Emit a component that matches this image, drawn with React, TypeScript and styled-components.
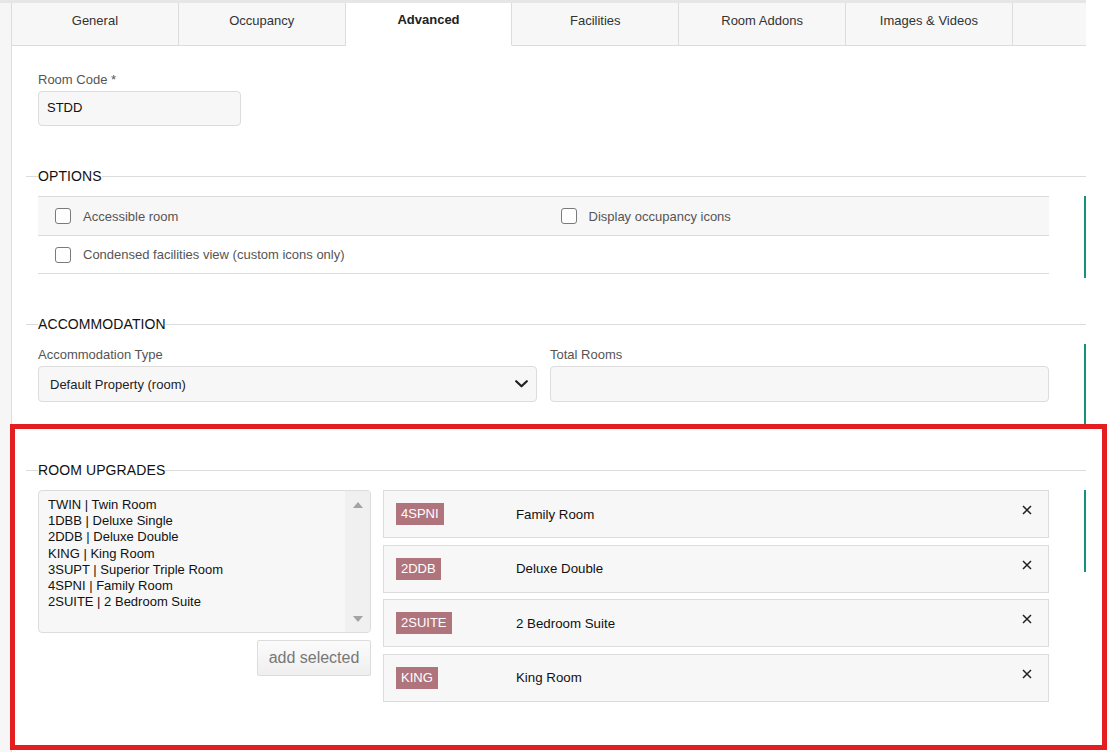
import React from "react";
import styled, { createGlobalStyle } from "styled-components";

const GlobalStyle = createGlobalStyle`
  html, body { margin: 0; padding: 0; background: #fff; }
  body {
    font-family: "Liberation Sans", Arial, sans-serif;
    font-size: 13px;
    color: #222;
  }
  * { box-sizing: border-box; }
`;

const Frame = styled.div`
  position: relative;
  width: 1109px;
  height: 752px;
  overflow: hidden;
  background: #fff;
`;

const Shell = styled.div`
  display: flex;
  width: 1086px;
  height: 752px;
  border-top: 3px solid #e6e6e6;
`;

const Gutter = styled.div`
  flex: 0 0 12px;
  background: #f6f6f6;
  border-right: 1px solid #dcdcdc;
`;

const Main = styled.div`
  flex: 1;
  display: flex;
  flex-direction: column;
  min-width: 0;
`;

const TabBar = styled.div`
  display: flex;
  height: 43px;
`;

const Tab = styled.div<{ $active?: boolean; $fill?: boolean }>`
  flex: ${(p) => (p.$fill ? "1 1 auto" : "0 0 166.8px")};
  padding-top: ${(p) => (p.$active ? 9 : 10)}px;
  line-height: 16px;
  text-align: center;
  font-size: 13px;
  color: ${(p) => (p.$active ? "#222" : "#333")};
  font-weight: ${(p) => (p.$active ? 700 : 400)};
  background: ${(p) => (p.$active ? "#fff" : "#f7f7f7")};
  border-right: ${(p) => (p.$fill ? "none" : "1px solid #dcdcdc")};
  border-bottom: 1px solid ${(p) => (p.$active ? "#fff" : "#dcdcdc")};
`;

const Body = styled.div`
  padding: 26px 0 0 14px;
`;

const Field = styled.div`
  display: flex;
  flex-direction: column;
`;

const CodeField = styled(Field)`
  padding-left: 12px;
  width: 215px;
`;

const Label = styled.label<{ $top?: number }>`
  display: block;
  padding-top: ${(p) => p.$top ?? 0}px;
  margin-bottom: 3px;
  line-height: 16px;
  font-size: 13px;
  color: #555;
`;

const TextBox = styled.div`
  height: 36px;
  display: flex;
  align-items: center;
  padding: 0 8px;
  background: #f7f7f7;
  border: 1px solid #dcdcdc;
  border-radius: 4px;
  font-size: 13px;
  color: #111;
`;

const CodeBox = styled(TextBox)`
  height: 35px;
  padding-bottom: 3px;
`;

const Section = styled.section<{ $gap: number }>`
  margin-top: ${(p) => p.$gap}px;
`;

const Legend = styled.div`
  display: flex;
  align-items: center;
  height: 18px;
  font-size: 14px;
  color: #111;
  letter-spacing: 0.1px;

  &::before {
    content: "";
    flex: 0 0 12px;
    height: 1px;
    background: #dcdcdc;
  }
  &::after {
    content: "";
    flex: 1;
    height: 1px;
    background: #dcdcdc;
  }
`;

const SectionBody = styled.div`
  display: flex;
  align-items: flex-start;
  margin-top: 11px;
  padding-left: 12px;
`;

const Content = styled.div`
  width: 1011px;
`;

const ScrollMark = styled.div`
  margin-left: auto;
  flex: 0 0 2px;
  height: 82px;
  background: #17917f;
`;

const OptionsTable = styled.div`
  border-top: 1px solid #dcdcdc;
`;

const OptionRow = styled.div<{ $shaded?: boolean }>`
  display: grid;
  grid-template-columns: 1fr 1fr;
  height: ${(p) => (p.$shaded ? 39 : 38)}px;
  background: ${(p) => (p.$shaded ? "#f7f7f7" : "#fff")};
  border-bottom: 1px solid #dcdcdc;
`;

const OptionCell = styled.label`
  display: flex;
  align-items: center;
  padding-left: 17px;
  font-size: 13px;
  color: #555;
`;

const CheckBox = styled.span`
  flex: 0 0 16px;
  width: 16px;
  height: 16px;
  margin-right: 12px;
  border: 1.5px solid #7a7a7a;
  border-radius: 3px;
  background: #fff;
`;

const TwoCols = styled.div`
  display: grid;
  grid-template-columns: 499px 499px;
  column-gap: 13px;
`;

const SelectBox = styled(TextBox)`
  justify-content: space-between;
  padding: 0 8px 0 11px;
  color: #222;
`;

const UpgradeGrid = styled.div`
  display: grid;
  grid-template-columns: 333px 666px;
  column-gap: 12px;
  align-items: start;
`;

const PickerColumn = styled.div`
  display: flex;
  flex-direction: column;
  align-items: flex-end;
`;

const ListBox = styled.div`
  display: flex;
  width: 100%;
  height: 143px;
  background: #f7f7f7;
  border: 1px solid #dcdcdc;
  border-radius: 4px;
  overflow: hidden;
`;

const ListOptions = styled.ul`
  flex: 1;
  margin: 0;
  padding: 6px 0 0 9px;
  list-style: none;
`;

const ListOption = styled.li`
  line-height: 16.2px;
  font-size: 13px;
  color: #111;
  white-space: nowrap;
`;

const ListScroll = styled.div`
  flex: 0 0 25px;
  display: flex;
  flex-direction: column;
  justify-content: space-between;
  align-items: center;
  padding: 11px 0 10px;
  background: #f0f0f0;
`;

const Arrow = styled.span<{ $down?: boolean }>`
  width: 0;
  height: 0;
  border-left: 5px solid transparent;
  border-right: 5px solid transparent;
  ${(p) =>
    p.$down
      ? "border-top: 6px solid #a3a3a3;"
      : "border-bottom: 6px solid #a3a3a3;"}
`;

const AddButton = styled.button`
  margin-top: 7px;
  width: 114px;
  height: 36px;
  padding: 0;
  font-family: "Liberation Sans", Arial, sans-serif;
  font-size: 16px;
  color: #777;
  background: linear-gradient(#fbfbfb, #efefef);
  border: 1px solid #dcdcdc;
  border-radius: 2px;
`;

const Chosen = styled.ul`
  display: flex;
  flex-direction: column;
  gap: 6.5px;
  margin: 0;
  padding: 0;
  list-style: none;
`;

const ChosenItem = styled.li`
  display: flex;
  align-items: center;
  height: 48px;
  padding: 0 16px 0 12px;
  background: #f7f7f7;
  border: 1px solid #dcdcdc;
`;

const CodeCell = styled.div`
  flex: 0 0 120px;
`;

const CodeBadge = styled.span`
  display: inline-block;
  height: 22px;
  line-height: 22px;
  padding: 0 5px;
  background: #b0747d;
  color: #fff;
  font-size: 13px;
`;

const RoomName = styled.span`
  flex: 1;
  font-size: 13.3px;
  color: #111;
`;

const RemoveButton = styled.span`
  align-self: flex-start;
  margin-top: 14px;
  display: flex;
`;

const Highlight = styled.div`
  position: absolute;
  left: 10px;
  top: 424px;
  width: 1097px;
  height: 326px;
  border: 5px solid #e41d21;
  pointer-events: none;
`;

const Chevron = () => (
  <svg width="13" height="8" viewBox="0 0 13 8" aria-hidden>
    <path d="M1.2 1.2 L6.5 6.3 L11.8 1.2" fill="none" stroke="#222" strokeWidth="2.2" strokeLinecap="round" strokeLinejoin="round" />
  </svg>
);

const CloseIcon = () => (
  <svg width="10" height="10" viewBox="0 0 10 10" aria-hidden>
    <path d="M1 1 L9 9 M9 1 L1 9" stroke="#222" strokeWidth="1.5" />
  </svg>
);

const tabs = ["General", "Occupancy", "Advanced", "Facilities", "Room Addons", "Images & Videos"];

const roomTypes = [
  "TWIN | Twin Room",
  "1DBB | Deluxe Single",
  "2DDB | Deluxe Double",
  "KING | King Room",
  "3SUPT | Superior Triple Room",
  "4SPNI | Family Room",
  "2SUITE | 2 Bedroom Suite",
];

const upgrades = [
  { code: "4SPNI", name: "Family Room" },
  { code: "2DDB", name: "Deluxe Double" },
  { code: "2SUITE", name: "2 Bedroom Suite" },
  { code: "KING", name: "King Room" },
];

export default function App() {
  return (
    <Frame>
      <GlobalStyle />
      <Shell>
        <Gutter />
        <Main>
          <TabBar>
            {tabs.map((t) => (
              <Tab key={t} $active={t === "Advanced"}>
                {t}
              </Tab>
            ))}
            <Tab $fill />
          </TabBar>

          <Body>
            <CodeField>
              <Label>Room Code *</Label>
              <CodeBox>STDD</CodeBox>
            </CodeField>

            <Section $gap={41}>
              <Legend>OPTIONS</Legend>
              <SectionBody>
                <Content>
                  <OptionsTable>
                    <OptionRow $shaded>
                      <OptionCell>
                        <CheckBox />
                        Accessible room
                      </OptionCell>
                      <OptionCell>
                        <CheckBox />
                        Display occupancy icons
                      </OptionCell>
                    </OptionRow>
                    <OptionRow>
                      <OptionCell>
                        <CheckBox />
                        Condensed facilities view (custom icons only)
                      </OptionCell>
                    </OptionRow>
                  </OptionsTable>
                </Content>
                <ScrollMark />
              </SectionBody>
            </Section>

            <Section $gap={37}>
              <Legend>ACCOMMODATION</Legend>
              <SectionBody>
                <Content>
                  <TwoCols>
                    <Field>
                      <Label $top={3}>Accommodation Type</Label>
                      <SelectBox>
                        Default Property (room)
                        <Chevron />
                      </SelectBox>
                    </Field>
                    <Field>
                      <Label $top={3}>Total Rooms</Label>
                      <TextBox />
                    </Field>
                  </TwoCols>
                </Content>
                <ScrollMark />
              </SectionBody>
            </Section>

            <Section $gap={35}>
              <Legend>ROOM UPGRADES</Legend>
              <SectionBody>
                <Content>
                  <UpgradeGrid>
                    <PickerColumn>
                      <ListBox>
                        <ListOptions>
                          {roomTypes.map((r) => (
                            <ListOption key={r}>{r}</ListOption>
                          ))}
                        </ListOptions>
                        <ListScroll>
                          <Arrow />
                          <Arrow $down />
                        </ListScroll>
                      </ListBox>
                      <AddButton>add selected</AddButton>
                    </PickerColumn>
                    <Chosen>
                      {upgrades.map((u) => (
                        <ChosenItem key={u.code}>
                          <CodeCell>
                            <CodeBadge>{u.code}</CodeBadge>
                          </CodeCell>
                          <RoomName>{u.name}</RoomName>
                          <RemoveButton>
                            <CloseIcon />
                          </RemoveButton>
                        </ChosenItem>
                      ))}
                    </Chosen>
                  </UpgradeGrid>
                </Content>
                <ScrollMark />
              </SectionBody>
            </Section>
          </Body>
        </Main>
      </Shell>
      <Highlight />
    </Frame>
  );
}
